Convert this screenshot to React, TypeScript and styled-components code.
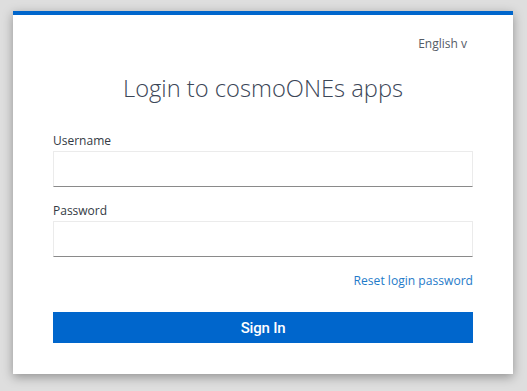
import styled, { createGlobalStyle } from "styled-components";

const GlobalStyle = createGlobalStyle`
  html, body {
    margin: 0;
    padding: 0;
    background: #dedede;
    font-family: "Open Sans", "Liberation Sans", sans-serif;
  }
`;

const Page = styled.div`
  width: 527px;
  height: 391px;
  padding: 11px 0 0 13px;
  box-sizing: border-box;
`;

const Card = styled.div`
  width: 500px;
  height: 363px;
  box-sizing: border-box;
  background: #ffffff;
  border-top: 4px solid #0066cc;
  box-shadow: 0 3px 10px rgba(0, 0, 0, 0.35);
  padding: 0 40px;
  display: flex;
  flex-direction: column;
`;

const LangRow = styled.div`
  display: flex;
  justify-content: flex-end;
  padding: 20px 6px 0 0;
  height: 18px;
`;

const LangButton = styled.span`
  font-size: 12px;
  line-height: 18px;
  color: #555c66;
  cursor: pointer;
`;

const Title = styled.h1`
  margin: 19px 0 0;
  text-align: center;
  font-weight: 300;
  font-size: 23.7px;
  line-height: 32px;
  color: #3b4657;
`;

const Form = styled.form`
  display: flex;
  flex-direction: column;
  margin-top: 28px;
`;

const Field = styled.div`
  display: flex;
  flex-direction: column;
  gap: 1px;
  margin-bottom: 15px;
`;

const Label = styled.label`
  font-size: 12px;
  line-height: 18px;
  color: #333a44;
`;

const Input = styled.input`
  height: 36px;
  box-sizing: border-box;
  border: 1px solid #ebebeb;
  border-bottom: 1px solid #8a8a8a;
  outline: none;
  padding: 0 10px;
  font-family: inherit;
  font-size: 13px;
`;

const LinkRow = styled.div`
  display: flex;
  justify-content: flex-end;
`;

const ResetLink = styled.a`
  font-size: 12.1px;
  line-height: 18px;
  color: #1f7bc9;
  text-decoration: none;
`;

const SignInButton = styled.button`
  margin-top: 22px;
  height: 31px;
  border: none;
  background: #0066cc;
  color: #ffffff;
  font-family: "Roboto", "Liberation Sans", sans-serif;
  font-weight: 500;
  font-size: 15px;
  letter-spacing: -0.2px;
  cursor: pointer;
`;

export default function App() {
  return (
    <Page>
      <GlobalStyle />
      <Card>
        <LangRow>
          <LangButton>English v</LangButton>
        </LangRow>
        <Title>Login to cosmoONEs apps</Title>
        <Form onSubmit={(e) => e.preventDefault()}>
          <Field>
            <Label>Username</Label>
            <Input type="text" />
          </Field>
          <Field>
            <Label>Password</Label>
            <Input type="password" />
          </Field>
          <LinkRow>
            <ResetLink href="#">Reset login password</ResetLink>
          </LinkRow>
          <SignInButton type="submit">Sign In</SignInButton>
        </Form>
      </Card>
    </Page>
  );
}
